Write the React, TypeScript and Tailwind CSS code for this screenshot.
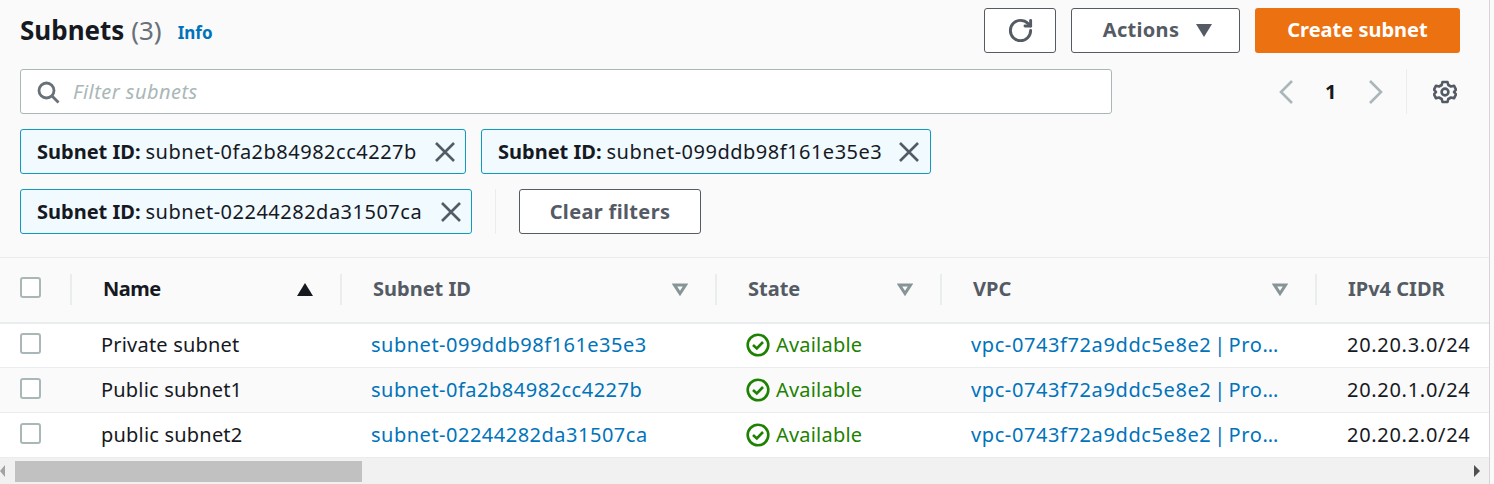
import { RotateCw } from 'lucide-react';

const FONT = "font-['Noto_Sans',sans-serif]";

const rows = [
  { name: 'Private subnet', id: 'subnet-099ddb98f161e35e3', cidr: '20.20.3.0/24', bg: 'bg-white', height: 'h-[44px] pb-[1px]' },
  { name: 'Public subnet1', id: 'subnet-0fa2b84982cc4227b', cidr: '20.20.1.0/24', bg: 'bg-[#fafafa]', height: 'h-[45px]' },
  { name: 'public subnet2', id: 'subnet-02244282da31507ca', cidr: '20.20.2.0/24', bg: 'bg-white', height: 'h-[45px]' },
];

function Checkbox() {
  return <div className="w-[21px] h-[21px] rounded-[3px] border-2 border-[#aab7b8] bg-white" />;
}

function CloseIcon() {
  return (
    <svg width="22" height="22" viewBox="0 0 22 22" fill="none" stroke="#545b64" strokeWidth="2.6">
      <path d="M2 2 L20 20 M20 2 L2 20" />
    </svg>
  );
}

function Token({ value, gap, width }: { value: string; gap: string; width: string }) {
  return (
    <div className={`flex items-center h-[45px] ${width} pl-4 rounded-[3px] border border-[#0f9bc0] bg-[#f1faff] text-[#16191f]`}>
      <span className="font-bold">Subnet ID:</span>
      <span className="ml-[5px] whitespace-nowrap tracking-[0.5px]">{value}</span>
      <span className={gap}>
        <CloseIcon />
      </span>
    </div>
  );
}

function FilterCaret() {
  return (
    <svg width="16" height="13" viewBox="0 0 16 13" fill="none" stroke="#879596" strokeWidth="3">
      <path d="M2.5 2 H13.5 L8 10.5 Z" />
    </svg>
  );
}

function HeaderCell({ label, width, dark, caret }: { label: string; width: string; dark?: boolean; caret?: boolean }) {
  return (
    <div className={`${width} flex items-center h-[31px] pl-[31px] pr-[27px] border-r-2 border-[#eaeded] justify-between`}>
      <span className={`font-bold whitespace-nowrap ${dark ? 'text-[#16191f] tracking-[-0.5px]' : 'text-[#545b64]'}`}>{label}</span>
      {caret && <FilterCaret />}
      {dark && (
        <svg width="16" height="13" viewBox="0 0 16 13" fill="#16191f">
          <path d="M8 0 L16 13 H0 Z" />
        </svg>
      )}
    </div>
  );
}

export default function App() {
  return (
    <div className={`${FONT} w-[1494px] h-[484px] overflow-hidden flex bg-[#fafafa] text-[20px] leading-[26px]`}>
      <div className="w-[1489px] flex flex-col shrink-0">
        <div className="h-[258px] flex flex-col px-5 pt-2 border-b border-[#eaeded]">
          <div className="flex items-center h-[44px]">
            <h1 className="text-[26px] font-bold text-[#16191f]">
              Subnets <span className="font-normal text-[#687078]">(3)</span>
            </h1>
            <a className="ml-[16px] mt-[5px] text-[17px] font-bold text-[#0073bb]">Info</a>
            <div className="ml-auto mr-[9px] flex items-center gap-[15px]">
              <button className="w-[72px] h-[45px] flex items-center justify-center rounded-[3px] border border-[#545b64] bg-white">
                <RotateCw size={27} strokeWidth={2.6} color="#545b64" />
              </button>
              <button className="w-[169px] h-[45px] flex items-center justify-center gap-[17px] pl-[4px] rounded-[3px] border border-[#545b64] bg-white text-[#545b64] font-bold tracking-[0.3px]">
                Actions
                <svg width="16" height="13" viewBox="0 0 16 13" fill="#545b64">
                  <path d="M0 0 H16 L8 13 Z" />
                </svg>
              </button>
              <button className="w-[205px] h-[45px] rounded-[3px] bg-[#ec7211] text-white font-bold">Create subnet</button>
            </div>
          </div>
          <div className="flex items-center h-[45px] mt-[17px]">
            <div className="w-[1092px] h-[45px] flex items-center rounded-[3px] border border-[#aab7b8] bg-white pl-[15px]">
              <svg width="24" height="24" viewBox="0 0 24 24" fill="none" stroke="#687078" strokeWidth="2.8">
                <circle cx="10.5" cy="10.5" r="7.5" />
                <path d="M16 16 L22.5 22.5" />
              </svg>
              <span className="ml-[13px] italic tracking-[0.45px] text-[#aab7b8]">Filter subnets</span>
            </div>
            <div className="ml-[166px] flex items-center">
              <svg width="16" height="26" viewBox="0 0 16 26" fill="none" stroke="#aab7b8" strokeWidth="2.6">
                <path d="M14 2 L3 13 L14 24" />
              </svg>
              <span className="ml-[31px] w-[12px] font-bold text-[#16191f]">1</span>
              <svg className="ml-[31px]" width="16" height="26" viewBox="0 0 16 26" fill="none" stroke="#aab7b8" strokeWidth="2.6">
                <path d="M2 2 L13 13 L2 24" />
              </svg>
              <div className="ml-[22px] w-px h-[45px] bg-[#eaeded]" />
              <svg className="ml-[26px]" width="24" height="24" viewBox="0 0 24 24" fill="none" stroke="#545b64" strokeWidth="2.6" strokeLinejoin="round">
                <path d="M9.5 2 H14.5 L15.3 5 L18 6.5 L21 5.7 L23 9.6 L21 12 L23 14.4 L21 18.3 L18 17.5 L15.3 19 L14.5 22 H9.5 L8.7 19 L6 17.5 L3 18.3 L1 14.4 L3 12 L1 9.6 L3 5.7 L6 6.5 L8.7 5 Z" />
                <circle cx="12" cy="12" r="3.4" />
              </svg>
            </div>
          </div>
          <div className="flex gap-[15px] mt-[15px]">
            <Token value="subnet-0fa2b84982cc4227b" gap="ml-[17px]" width="w-[446px]" />
            <Token value="subnet-099ddb98f161e35e3" gap="ml-[16px]" width="w-[450px]" />
          </div>
          <div className="flex items-center mt-[15px]">
            <Token value="subnet-02244282da31507ca" gap="ml-[18px]" width="w-[452px]" />
            <div className="ml-[23px] w-px h-[45px] bg-[#eaeded]" />
            <button className="ml-[23px] w-[182px] h-[45px] rounded-[3px] border border-[#545b64] bg-white text-[#545b64] font-bold tracking-[0.35px]">
              Clear filters
            </button>
          </div>
        </div>
        <div className="h-[66px] shrink-0 flex items-center pb-[2px] border-b-2 border-[#eaeded]">
          <div className="w-[72px] h-[31px] pl-5 border-r-2 border-[#eaeded] flex items-center">
            <div className="-mt-[3px]">
              <Checkbox />
            </div>
          </div>
          <HeaderCell label="Name" width="w-[270px]" dark />
          <HeaderCell label="Subnet ID" width="w-[375px]" caret />
          <HeaderCell label="State" width="w-[225px]" caret />
          <HeaderCell label="VPC" width="w-[375px]" caret />
          <div className="pl-[31px] font-bold text-[#545b64] whitespace-nowrap">IPv4 CIDR</div>
        </div>
        {rows.map(row => (
          <div key={row.id} className={`${row.height} shrink-0 flex items-center border-b border-[#eaeded] ${row.bg} text-[#16191f]`}>
            <div className="w-[101px] pl-5 -mt-[4px]">
              <Checkbox />
            </div>
            <div className="w-[270px] whitespace-nowrap tracking-[0.2px]">{row.name}</div>
            <a className="w-[375px] text-[#0073bb] whitespace-nowrap tracking-[0.5px]">{row.id}</a>
            <div className="w-[225px] flex items-center gap-[6px] text-[#1d8102] tracking-[0.2px]">
              <svg width="24" height="24" viewBox="0 0 24 24" fill="none" stroke="#1d8102" strokeWidth="2.6">
                <circle cx="12" cy="12" r="10.3" />
                <path d="M7 12 L10.8 15.5 L17 9" />
              </svg>
              Available
            </div>
            <a className="w-[376px] whitespace-nowrap text-[#0073bb] tracking-[0.6px] [word-spacing:-3px]">vpc-0743f72a9ddc5e8e2 | Pro…</a>
            <div className="whitespace-nowrap tracking-[0.7px]">{row.cidr}</div>
          </div>
        ))}
        <div className="flex-1 flex items-center bg-[#f1f1f1]">
          <div className="w-[15px] flex justify-start">
            <div className="w-0 h-0 border-y-[6px] border-y-transparent border-r-[5px] border-r-[#a3a3a3]" />
          </div>
          <div className="w-[347px] h-[21px] bg-[#c1c1c1]" />
          <div className="ml-auto mr-[9px] w-0 h-0 border-y-[6px] border-y-transparent border-l-[6px] border-l-[#505050]" />
        </div>
      </div>
      <div className="flex-1 border-l border-[#d5d5d5] bg-[#fafafa]" />
    </div>
  );
}
